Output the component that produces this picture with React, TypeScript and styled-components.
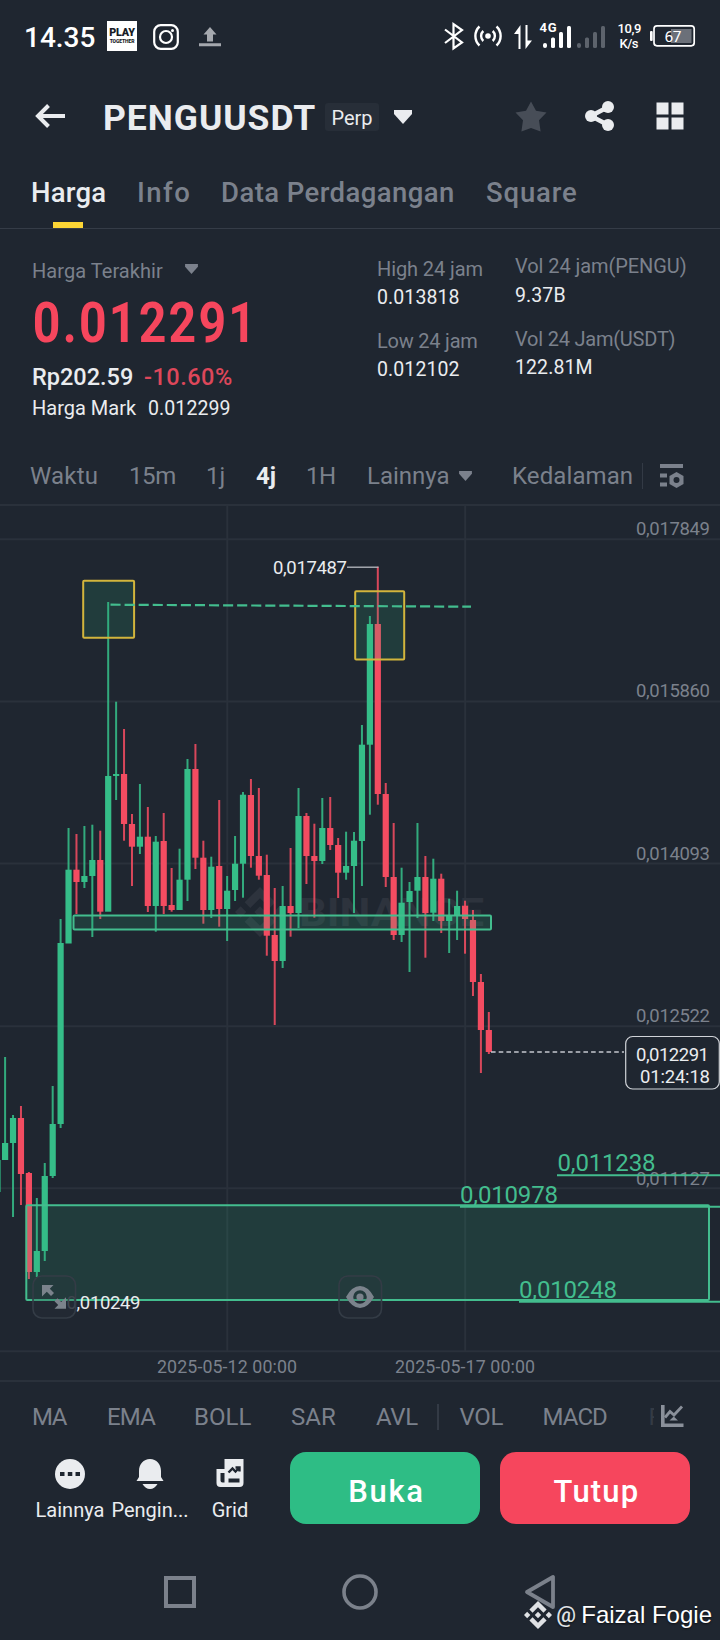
import React from "react";
import styled, { createGlobalStyle } from "styled-components";

const c = {
  bg: "#1f2630",
  text: "#eaecef",
  muted: "#7b818c",
  dim: "#474d57",
  green: "#2ebd85",
  greenLine: "#43bd8e",
  red: "#f6465d",
  yellow: "#fcd535",
};

const Global = createGlobalStyle`
  * { box-sizing: border-box; }
  body { margin: 0; background: ${c.bg}; }
  svg { display: block; flex: none; }
`;

const Screen = styled.div`
  position: relative;
  width: 720px;
  height: 1640px;
  overflow: hidden;
  background: ${c.bg};
  color: ${c.text};
  font-family: Roboto, "Liberation Sans", sans-serif;
  display: flex;
  flex-direction: column;
`;

const IconSlot = styled.span<{ $left: number; $lift?: number }>`
  flex: none;
  margin-left: ${(p) => p.$left}px;
  margin-bottom: ${(p) => p.$lift ?? 0}px;
`;

/* ---------- status bar ---------- */
const StatusBar = styled.div`
  height: 74px;
  display: flex;
  align-items: center;
  justify-content: space-between;
  padding: 0 24px;
`;
const StatusGroup = styled.div`
  display: flex;
  align-items: center;
`;
const Clock = styled.span`
  width: 83px;
  font-size: 28px;
  font-weight: 500;
  color: #fff;
`;
const AppBadge = styled.div`
  width: 30px;
  height: 30px;
  margin: -2px 16px 0 0;
  background: #fff;
  color: #171c26;
  font-weight: 900;
  text-align: center;
  padding-top: 7px;
`;
const BadgeLine = styled.div<{ $size: number; $gap: number }>`
  font-size: ${(p) => p.$size}px;
  line-height: ${(p) => p.$size}px;
  letter-spacing: ${(p) => p.$gap}px;
  white-space: nowrap;
`;
const StatusIcons = styled.svg`
  width: 256px;
  height: 40px;
`;

/* ---------- header ---------- */
const Header = styled.header`
  height: 86px;
  display: flex;
  align-items: center;
  padding: 0 36px 0 35px;
`;
const Pair = styled.h1`
  margin: 2px 0 0 38px;
  width: 222px;
  font-size: 35.5px;
  font-weight: 700;
  letter-spacing: 0.95px;
  white-space: nowrap;
`;
const PerpTag = styled.span`
  width: 54px;
  height: 28px;
  line-height: 30px;
  border-radius: 3px;
  background: #272e38;
  text-align: center;
  font-size: 20px;
  margin-right: 15px;
`;
const HeaderActions = styled.div`
  margin-left: auto;
  display: flex;
  align-items: center;
`;

/* ---------- tabs ---------- */
const Tabs = styled.nav`
  height: 69px;
  display: flex;
  padding-left: 31px;
  border-bottom: 1px solid #353c47;
`;
const Tab = styled.div<{ $w: number; $active?: boolean; $gap?: number }>`
  position: relative;
  width: ${(p) => p.$w}px;
  line-height: 66px;
  font-size: 27.5px;
  font-weight: 500;
  white-space: nowrap;
  letter-spacing: ${(p) => p.$gap ?? 0}px;
  color: ${(p) => (p.$active ? c.text : c.muted)};
  ${(p) =>
    p.$active &&
    `&::after {
      content: "";
      position: absolute;
      left: 22px;
      bottom: 0;
      width: 30px;
      height: 6px;
      background: ${c.yellow};
    }`}
`;

/* ---------- statistics ---------- */
const Stats = styled.section`
  height: 221px;
  display: grid;
  grid-template-columns: 345px 138px 1fr;
  padding-left: 32px;
`;
const PriceColumn = styled.div`
  padding-top: 29px;
`;
const StatColumn = styled.div<{ $top: number }>`
  padding-top: ${(p) => p.$top}px;
`;
const StatPair = styled.div<{ $h?: number }>`
  height: ${(p) => p.$h ?? 72}px;
  font-size: 20px;
  line-height: 28px;
  white-space: nowrap;
`;
const StatLabel = styled.div<{ $gap?: number }>`
  color: ${c.muted};
  letter-spacing: ${(p) => p.$gap ?? 0}px;
`;
const StatValue = styled.div<{ $drop?: number }>`
  padding-top: ${(p) => p.$drop ?? 1}px;
  font-size: 19.5px;
  letter-spacing: 0.1px;
  color: ${c.text};
`;
const LastLabel = styled.div`
  display: flex;
  height: 26px;
  line-height: 26px;
  font-size: 20px;
  color: ${c.muted};
  svg { margin: 6px 0 0 22px; }
  span { width: 131px; letter-spacing: 0.05px; }
`;
const LastPrice = styled.div`
  height: 76px;
  line-height: 78px;
  font-size: 56px;
  font-weight: 700;
  letter-spacing: 2.6px;
  padding-left: 1px;
  color: ${c.red};
  transform: scaleX(0.86);
  transform-origin: 0 50%;
`;
const FiatRow = styled.div`
  height: 33px;
  line-height: 35px;
  font-size: 23.5px;
  font-weight: 500;
  display: flex;
  span:first-child { width: 112px; }
  span:last-child { color: #dd475a; letter-spacing: 0.5px; }
`;
const MarkRow = styled.div`
  height: 30px;
  line-height: 31px;
  font-size: 20px;
  display: flex;
  span:first-child { width: 116px; }
  span:last-child { font-size: 19.5px; letter-spacing: 0.1px; }
`;

/* ---------- option rows ---------- */
const OptionRow = styled.div<{ $h: number; $left: number; $pad?: number }>`
  height: ${(p) => p.$h}px;
  padding: 0 36px ${(p) => p.$pad ?? 0}px ${(p) => p.$left}px;
  display: flex;
  align-items: center;
`;
const Option = styled.span<{ $w: number; $active?: boolean; $gap?: number; $left?: number }>`
  flex: none;
  width: ${(p) => p.$w}px;
  margin-left: ${(p) => p.$left ?? 0}px;
  font-size: 24px;
  white-space: nowrap;
  letter-spacing: ${(p) => p.$gap ?? 0}px;
  font-weight: ${(p) => (p.$active ? 700 : 400)};
  color: ${(p) => (p.$active ? c.text : c.muted)};
`;
const Divider = styled.i<{ $right: number }>`
  width: 1.5px;
  height: 26px;
  background: #333a45;
  margin-right: ${(p) => p.$right}px;
`;
const Clipped = styled.span`
  width: 5px;
  margin-right: 6px;
  overflow: hidden;
  font-size: 24px;
  color: #343b45;
`;

/* ---------- bottom actions ---------- */
const ActionBar = styled.div`
  display: flex;
  padding: 1px 30px 0 30px;
  height: 79px;
`;
const Shortcut = styled.div`
  width: 80px;
  padding-top: 7px;
  display: flex;
  flex-direction: column;
  align-items: center;
`;
const ShortcutLabel = styled.span`
  margin-top: 9px;
  font-size: 20px;
  line-height: 24px;
  white-space: nowrap;
`;
const TradeButton = styled.button<{ $color: string; $gap: number }>`
  width: 190px;
  height: 72px;
  margin-left: 20px;
  border: 0;
  border-radius: 16px;
  background: ${(p) => p.$color};
  color: #fff;
  font-family: inherit;
  font-size: 31px;
  font-weight: 500;
  letter-spacing: ${(p) => p.$gap}px;
  line-height: 76px;
  padding: 2px 0 0 3px;
`;

/* ---------- system navigation ---------- */
const SystemNav = styled.div`
  flex: 1;
  display: flex;
  padding: 44px 0 0 162px;
  gap: 144px;
`;
const Signature = styled.div`
  position: absolute;
  right: 8px;
  bottom: 10px;
  display: flex;
  align-items: center;
  font-family: "Liberation Sans", sans-serif;
  font-size: 24px;
  line-height: 30px;
  color: #fff;
  white-space: nowrap;
  text-shadow: 0 1px 2px rgba(0, 0, 0, 0.6);
`;
const At = styled.span`
  width: 25px;
  margin-left: 4px;
  font-family: Roboto, sans-serif;
  font-size: 22px;
  font-weight: 500;
  color: #dfe1e4;
`;

const Caret = ({ w, h, color }: { w: number; h: number; color: string }) => (
  <svg width={w} height={h} viewBox="0 0 18 14">
    <path d="M0 0h18v4L9 14 0 4z" fill={color} />
  </svg>
);

const MARK_PATH =
  "M38.7 53.2L63.3 28.6l24.6 24.6 14.3-14.3L63.3 0 24.4 38.9zM0 63.3L14.3 49l14.3 14.3-14.3 14.3zM38.7 73.4L63.3 98l24.6-24.6 14.3 14.3-38.9 38.9-38.9-38.9zM98 63.3L112.3 49l14.3 14.3-14.3 14.3zM77.8 63.3L63.3 48.8 48.8 63.3l14.5 14.5z";

/* [direction, high, bodyTop, bodyBottom, low] */
type Candle = [0 | 1, number, number, number, number];
const candles: Candle[] = [
  [1, 1057, 1143, 1160, 1160], [1, 1115, 1118, 1143, 1217], [0, 1106, 1118, 1174, 1205],
  [0, 1172, 1173, 1272, 1279], [1, 1198, 1251, 1272, 1277], [1, 1163, 1176, 1251, 1261],
  [1, 1086, 1124, 1176, 1178], [1, 919, 943, 1124, 1128], [1, 828, 869.7, 943.5, 943],
  [0, 834, 869.7, 882, 914], [1, 826, 876, 882, 888], [1, 824.7, 860, 876, 937],
  [0, 830.7, 860, 911.7, 919], [1, 602, 776, 911.7, 911], [1, 701.7, 774, 776, 800],
  [0, 729, 774, 824, 840.7], [0, 814, 824, 846.7, 886], [1, 784, 836.7, 846.7, 854],
  [0, 807, 836.7, 906, 912], [1, 836, 841.7, 906, 931.7], [0, 813, 841, 906, 914],
  [0, 868, 905, 910, 911.7], [1, 848.7, 879.7, 910, 910], [1, 759, 769, 879.7, 901],
  [0, 744, 769, 857.7, 869], [0, 840.7, 857.7, 910, 923.7], [1, 856.7, 866.7, 910, 918],
  [0, 800, 866, 909, 926.7], [1, 876, 890.7, 909, 941], [1, 836, 863.7, 890, 901],
  [1, 792, 794.7, 863.7, 897.7], [0, 779, 795, 856, 867.7], [0, 788, 856, 875.7, 879.7],
  [0, 854.7, 875, 935.7, 955.7], [0, 888, 935, 961, 1025], [1, 886, 906, 961, 968],
  [0, 848, 906, 913, 936.7], [1, 788, 816, 913, 928], [0, 813, 816, 856, 884],
  [0, 823.7, 856, 861, 917.7], [1, 798, 828, 861, 864], [0, 797, 828, 845, 850],
  [0, 838, 845, 872.7, 898], [1, 831.7, 866, 872.7, 879.7], [1, 832, 840.7, 866, 913],
  [1, 725, 744.7, 841, 886], [1, 616, 624, 744.7, 814.7], [0, 566.7, 624, 794, 804.7],
  [0, 783, 794, 877, 887], [0, 823, 877, 935, 940], [1, 867.7, 902.7, 935, 942],
  [1, 882, 891, 902, 972], [1, 823, 877, 890.7, 918], [0, 856, 877, 913, 957.7],
  [1, 858.7, 878.7, 912.7, 921], [0, 873.7, 878.7, 921, 933], [1, 898.7, 916, 921, 953],
  [1, 890.7, 906, 916, 940], [0, 900.7, 905.7, 919, 953.7], [0, 910, 920, 982, 996],
  [0, 974, 982, 1030, 1073], [0, 1012, 1030, 1052, 1054],
];

const axis: [string, number][] = [
  ["0,017849", 535], ["0,015860", 697], ["0,014093", 860], ["0,012522", 1022], ["0,011127", 1185],
];

const Chart = () => (
  <svg width="720" height="878" viewBox="0 504 720 878" fontFamily="Roboto, sans-serif">
    <g stroke="#2a313b" strokeWidth="2">
      {[505, 539.3, 701.5, 863.5, 1026.3, 1188.3, 1351.3, 1381].map((y) => (
        <line key={y} x1="0" x2="720" y1={y} y2={y} />
      ))}
      <line x1="227.3" x2="227.3" y1="505" y2="1351" />
      <line x1="465.2" x2="465.2" y1="505" y2="1351" />
    </g>
    <g fill="#2d333d">
      <svg x="235" y="887" width="50" height="50" viewBox="0 0 126.6 126.6">
        <path d={MARK_PATH} />
      </svg>
      <text x="299" y="926" fontSize="38.5" fontWeight="700" textLength="185" lengthAdjust="spacingAndGlyphs">BINANCE</text>
    </g>
    <g fill={c.muted} fontSize="18.5">
      {axis.map(([label, y]) => (
        <text key={label} x="636" y={y} textLength="74">{label}</text>
      ))}
      <text x="157" y="1373" fontSize="17.8" textLength="140">2025-05-12 00:00</text>
      <text x="395" y="1373" fontSize="17.8" textLength="140">2025-05-17 00:00</text>
    </g>
    <rect x="0" y="1160" width="1" height="32" fill={c.green} opacity="0.6" />
    {candles.map(([up, high, top, bottom, low], i) => {
      const x = 5.1 + i * 7.93;
      return (
        <g key={i} fill={up ? "#35bd88" : "#f34c61"}>
          <rect x={x - 1} y={high} width="2" height={low - high} opacity="0.88" />
          <rect x={x - 3.1} y={top} width="6.2" height={Math.max(bottom - top, 2)} />
        </g>
      );
    })}
    <g fill={c.green} fillOpacity="0.15" strokeWidth="2">
      <rect x="83.2" y="580.7" width="50.9" height="57" rx="1" stroke="#d2b53c" />
      <rect x="355.2" y="591.2" width="49" height="68.3" rx="1" stroke="#d2b53c" />
      <rect x="73.5" y="915.5" width="417.5" height="14" rx="1" stroke={c.greenLine} />
      <rect x="26.3" y="1205.3" width="682.7" height="94.7" rx="1" stroke={c.greenLine} />
    </g>
    <line x1="110.5" y1="604.7" x2="471" y2="606.7" stroke={c.greenLine} strokeWidth="2.2" strokeDasharray="10.1 3.97" />
    <g stroke={c.greenLine} strokeWidth="2">
      <line x1="557" x2="720" y1="1175.2" y2="1175.2" />
      <line x1="460" x2="720" y1="1206.7" y2="1206.7" />
      <line x1="519" x2="720" y1="1301.8" y2="1301.8" />
    </g>
    <g fill={c.greenLine} fontSize="24">
      <text x="557.5" y="1171" textLength="98">0,011238</text>
      <text x="460" y="1203" textLength="98">0,010978</text>
      <text x="519" y="1298" textLength="98">0,010248</text>
    </g>
    <path d="M347 567.2H378.5" stroke="#b9bcc2" strokeWidth="1.3" />
    <g fill={c.text} fontSize="18.5">
      <text x="273" y="574" textLength="74">0,017487</text>
      <text x="66.5" y="1309" textLength="74">
        <tspan fill={c.dim}>0</tspan>,010249
      </text>
    </g>
    <path d="M491 1052H624" stroke="#c5c8ce" strokeWidth="1.3" strokeDasharray="4.6 3.1" />
    <rect x="625.7" y="1036.5" width="93.6" height="52.5" rx="7" fill={c.bg} stroke="#d0d3d8" strokeWidth="1.2" />
    <g fill={c.text} fontSize="18.5">
      <text x="636" y="1061" textLength="73">0,012291</text>
      <text x="640" y="1083" textLength="70">01:24:18</text>
    </g>
    <g fill="#2b333d" fillOpacity="0.25" stroke="#343c46" strokeWidth="1.6">
      <rect x="33" y="1276" width="42.5" height="42" rx="9" />
      <rect x="339" y="1276" width="42.5" height="42" rx="9" />
    </g>
    <g fill="#7b838c">
      <path d="M42 1285h11.5l-3.7 3.7 4.2 4.2-3 3-4.2-4.2-4.8 4.8zM66 1308.7H54.5l3.7-3.7-3.7-3.7 3-3 3.7 3.7 4.8-4.8z" />
      <path
        fillRule="evenodd"
        d="M346 1297q6-11 14-11t14 11q-6 11-14 11t-14-11zM360 1290.2a6.8 6.8 0 1 0 0 13.6a6.8 6.8 0 1 0 0-13.6z"
      />
      <circle cx="360" cy="1297" r="3.6" />
    </g>
  </svg>
);

export default function App() {
  return (
    <Screen>
      <Global />
      <StatusBar>
        <StatusGroup>
          <Clock>14.35</Clock>
          <AppBadge>
            <BadgeLine $size={10.8} $gap={-0.2}>PLAY</BadgeLine>
            <BadgeLine $size={5} $gap={-0.1}>TOGETHER</BadgeLine>
          </AppBadge>
          <svg width="26" height="26" viewBox="0 0 26 26" fill="none" stroke="#fff" strokeWidth="2.2">
            <rect x="1.2" y="1.2" width="23.6" height="23.6" rx="6.5" />
            <circle cx="13" cy="13" r="6" />
            <circle cx="19.5" cy="6.5" r="1.5" fill="#fff" stroke="none" />
          </svg>
          <IconSlot $left={20}>
            <svg width="22" height="20" viewBox="0 0 22 20" fill="#a5a8ae">
              <path d="M11 0l6.5 7.5H14V14.5H8V7.5H4.5zM0 16.2h22v3H0z" />
            </svg>
          </IconSlot>
        </StatusGroup>
        <StatusIcons viewBox="440 17 256 40" fill="none" stroke="#fff" fontFamily="Roboto, sans-serif">
          <path d="M445 29.5l17 13-8.5 6V24l8.5 6-17 13" strokeWidth="2.2" />
          <circle cx="488" cy="36" r="2.8" fill="#fff" stroke="none" />
          <path d="M483.3 31a6.8 6.8 0 0 0 0 10M492.7 31a6.8 6.8 0 0 1 0 10M479.5 26.5a13 13 0 0 0 0 19M496.5 26.5a13 13 0 0 1 0 19" strokeWidth="2.4" />
          <path d="M514 34l6.5-9V49h-2V34zM532 40.5L525.5 49V25h2v15.5z" fill="#fff" stroke="none" />
          <g fill="#fff" stroke="none">
            <text x="539.5" y="32" fontSize="13" fontWeight="700" textLength="17">4G</text>
            <rect x="543" y="43" width="4" height="5" rx="2" />
            <rect x="551" y="37.5" width="4" height="10.5" rx="1.5" />
            <rect x="559" y="32" width="4" height="16" rx="1.5" />
            <rect x="567" y="26" width="4" height="22" rx="1.5" />
            <text x="617.5" y="33" fontSize="13" fontWeight="500" textLength="24">10,9</text>
            <text x="619.5" y="48" fontSize="13" fontWeight="500" textLength="19">K/s</text>
          </g>
          <g fill="#5d636c" stroke="none">
            <rect x="577" y="43" width="4" height="5" rx="2" />
            <rect x="585" y="37.5" width="4" height="10.5" rx="1.5" />
            <rect x="593" y="32" width="4" height="16" rx="1.5" />
            <rect x="601" y="26" width="4" height="22" rx="1.5" />
          </g>
          <rect x="654" y="25.8" width="40.2" height="20" rx="3" strokeWidth="1.7" />
          <rect x="671" y="29" width="20.5" height="14" fill="#6b7079" stroke="none" />
          <rect x="650" y="31" width="2.7" height="10" rx="1" fill="#fff" stroke="none" />
          <text x="664.5" y="41.7" fontSize="15.5" fill="#fff" stroke="none" textLength="17">67</text>
        </StatusIcons>
      </StatusBar>

      <Header>
        <IconSlot $left={0} $lift={2}>
          <svg width="30" height="24" viewBox="0 0 30 24" fill="none" stroke={c.text} strokeWidth="4">
            <path d="M30 12H3M13.5 1.5L3 12l10.5 10.5" />
          </svg>
        </IconSlot>
        <Pair>PENGUUSDT</Pair>
        <PerpTag>Perp</PerpTag>
        <Caret w={18} h={14} color={c.text} />
        <HeaderActions>
          <svg width="32" height="32" viewBox="0 0 32 32" fill={c.dim}>
            <path d="M16 .5l5 9.3 10.5 1.7-7.5 7.7 1.6 11.3L16 27l-9.6 3.5L8 19.2.5 11.5 11 9.8z" />
          </svg>
          <IconSlot $left={38} $lift={2}>
            <svg width="30" height="30" viewBox="0 0 30 30" fill={c.text}>
              <circle cx="6" cy="15" r="6" />
              <circle cx="23" cy="6" r="6" />
              <circle cx="23" cy="24" r="6" />
              <path d="M23 6L6 15l17 9" fill="none" stroke={c.text} strokeWidth="4.5" />
            </svg>
          </IconSlot>
          <IconSlot $left={41} $lift={2}>
            <svg width="28" height="28" viewBox="0 0 28 28" fill={c.text}>
              <path d="M.5.5h12v12h-12zM15.5.5h12v12h-12zM.5 15.5h12v12h-12zM15.5 15.5h12v12h-12z" />
            </svg>
          </IconSlot>
        </HeaderActions>
      </Header>

      <Tabs>
        <Tab $w={106} $active $gap={0.2}>Harga</Tab>
        <Tab $w={84} $gap={1.5}>Info</Tab>
        <Tab $w={265} $gap={0.43}>Data Perdagangan</Tab>
        <Tab $w={100} $gap={0.85}>Square</Tab>
      </Tabs>

      <Stats>
        <PriceColumn>
          <LastLabel>
            <span>Harga Terakhir</span>
            <Caret w={13} h={10} color={c.muted} />
          </LastLabel>
          <LastPrice>0.012291</LastPrice>
          <FiatRow>
            <span>Rp202.59</span>
            <span>-10.60%</span>
          </FiatRow>
          <MarkRow>
            <span>Harga Mark</span>
            <span>0.012299</span>
          </MarkRow>
        </PriceColumn>
        <StatColumn $top={26}>
          <StatPair>
            <StatLabel $gap={-0.1}>High 24 jam</StatLabel>
            <StatValue>0.013818</StatValue>
          </StatPair>
          <StatPair>
            <StatLabel $gap={-0.22}>Low 24 jam</StatLabel>
            <StatValue>0.012102</StatValue>
          </StatPair>
        </StatColumn>
        <StatColumn $top={23}>
          <StatPair $h={73}>
            <StatLabel $gap={-0.07}>Vol 24 jam(PENGU)</StatLabel>
            <StatValue $drop={2}>9.37B</StatValue>
          </StatPair>
          <StatPair>
            <StatLabel $gap={-0.22}>Vol 24 Jam(USDT)</StatLabel>
            <StatValue>122.81M</StatValue>
          </StatPair>
        </StatColumn>
      </Stats>

      <OptionRow $h={54} $left={30} $pad={3}>
        <Option $w={99} $gap={0.2}>Waktu</Option>
        <Option $w={77} $gap={-0.4}>15m</Option>
        <Option $w={50}>1j</Option>
        <Option $w={50} $active>4j</Option>
        <Option $w={61} $gap={-0.5}>1H</Option>
        <Option $w={92}>Lainnya</Option>
        <Caret w={13} h={10} color={c.muted} />
        <Option $w={130} $gap={0.1} $left={40}>Kedalaman</Option>
        <Divider $right={17} />
        <svg width="24" height="24" viewBox="0 0 24 24" fill={c.muted}>
          <path d="M0 0h23v4H0zM0 9.5h7v4H0zM0 18.5h7v4H0z" />
          <path fillRule="evenodd" d="M16.5 8l7 4v8l-7 4-7-4v-8zM16.5 13a3 3 0 1 0 0 6a3 3 0 1 0 0-6z" />
        </svg>
      </OptionRow>

      <Chart />

      <OptionRow $h={69} $left={32}>
        <Option $w={75} $gap={-1.5}>MA</Option>
        <Option $w={87} $gap={-0.8}>EMA</Option>
        <Option $w={97} $gap={0}>BOLL</Option>
        <Option $w={85}>SAR</Option>
        <Option $w={61} $gap={-0.3}>AVL</Option>
        <Divider $right={21} />
        <Option $w={83} $gap={-0.3}>VOL</Option>
        <Option $w={106} $gap={-0.9}>MACD</Option>
        <Clipped>R</Clipped>
        <IconSlot $left={1}>
          <svg width="23" height="23" viewBox="0 0 23 23" fill="none" stroke="#8a909a" strokeWidth="3.6">
            <path d="M1.8 0v20.2H22.5" />
            <path d="M4 12.5l5-6 4 3.5L21 1.5" strokeWidth="2.8" />
            <path d="M8.5 15.5l4.2-4 4.3 4z" fill="#8a909a" stroke="none" />
          </svg>
        </IconSlot>
      </OptionRow>

      <ActionBar>
        <Shortcut>
          <svg width="30" height="30" viewBox="0 0 30 30">
            <circle cx="15" cy="15" r="15" fill={c.text} />
            <path d="M5 13h4.5v4H5zM12.8 13h4.5v4h-4.5zM20.5 13H25v4h-4.5z" fill={c.bg} />
          </svg>
          <ShortcutLabel>Lainnya</ShortcutLabel>
        </Shortcut>
        <Shortcut>
          <svg width="28" height="30" viewBox="0 0 28 30" fill={c.text}>
            <path d="M3 18v-6C3 5 7.5 0 14 0s11 5 11 12v6l2.5 4H.5zM6.5 25h15q-3 5-7.5 5t-7.5-5z" />
          </svg>
          <ShortcutLabel>Pengin...</ShortcutLabel>
        </Shortcut>
        <Shortcut>
          <svg width="28" height="30" viewBox="0 0 28 30">
            <path d="M8.5 0h19v24q0 4-4 4h-19q-4 0-4-4V10h8z" fill={c.text} />
            <path d="M4.5 14h4v9.5h-2q-2 0-2-2zM12.5 19.5h11v4h-11z" fill={c.bg} />
            <path d="M12.5 13.5l4-4 3 3 4-4M19.5 8.5h4v4" fill="none" stroke={c.bg} strokeWidth="2.4" />
          </svg>
          <ShortcutLabel>Grid</ShortcutLabel>
        </Shortcut>
        <TradeButton $color={c.green} $gap={1.7}>Buka</TradeButton>
        <TradeButton $color={c.red} $gap={1.2}>Tutup</TradeButton>
      </ActionBar>

      <SystemNav>
        <svg width="36" height="36" viewBox="0 0 36 36" fill="none" stroke="#7b818b" strokeWidth="4">
          <rect x="4" y="4" width="28" height="28" />
        </svg>
        <svg width="36" height="36" viewBox="0 0 36 36" fill="none" stroke="#7b818b" strokeWidth="3.6">
          <circle cx="18" cy="18" r="16" />
        </svg>
        <svg width="36" height="36" viewBox="0 0 36 36" fill="none" stroke="#7b818b" strokeWidth="3.8" strokeLinejoin="round">
          <path d="M31 3v30L5 18z" />
        </svg>
      </SystemNav>

      <Signature>
        <svg width="28" height="28" viewBox="0 0 126.6 126.6" fill="#dfe1e4">
          <path d={MARK_PATH} />
        </svg>
        <At>@</At>
        <span>Faizal Fogie</span>
      </Signature>
    </Screen>
  );
}
